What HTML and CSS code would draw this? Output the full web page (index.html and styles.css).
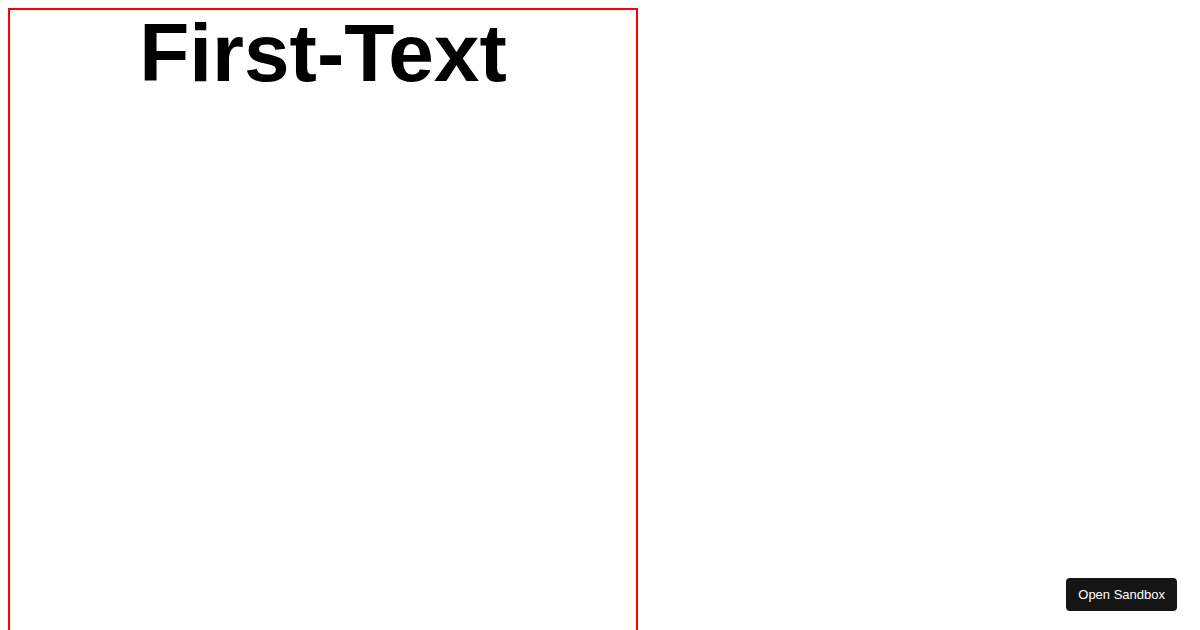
FILE: index.html
```html
<!DOCTYPE html>
<html>
<head>
<meta charset="utf-8">
<link rel="stylesheet" href="styles.css">
</head>
<body>
<div class="frame">
  <h1 class="title">First-Text</h1>
</div>
<a class="sandbox-btn">Open Sandbox</a>
</body>
</html>
```
FILE: styles.css
```css
html {
  background: #ffffff;
  height: 630px;
  overflow: hidden;
}
body {
  margin: 8px;
  font-family: "Liberation Sans", Arial, sans-serif;
}
.frame {
  width: 626px;
  height: 620px;
  border: 2px solid #ff0000;
}
.title {
  margin: 0;
  font-size: 82px;
  line-height: 1;
  font-weight: bold;
  text-align: center;
  color: #000;
  padding-top: 2px;
}
.sandbox-btn {
  position: fixed;
  right: 23px;
  bottom: 19px;
  background: #151515;
  color: #ffffff;
  font-family: "Liberation Sans", Arial, sans-serif;
  font-size: 13px;
  line-height: 17px;
  padding: 8px 12px;
  border-radius: 4px;
}
```
